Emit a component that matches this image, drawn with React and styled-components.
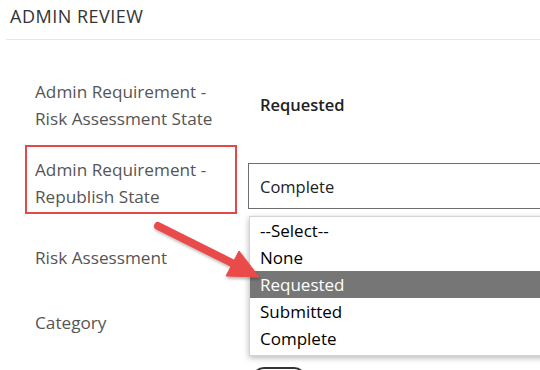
import React from 'react'
import styled, { createGlobalStyle } from 'styled-components'

const GlobalStyle = createGlobalStyle`
  html, body {
    margin: 0;
    padding: 0;
    background: #fff;
    overflow: hidden;
  }
  body {
    font-family: "Open Sans", "Noto Sans", sans-serif;
  }
`

const Page = styled.div`
  position: relative;
  width: 540px;
  height: 370px;
  overflow: hidden;
`

const Header = styled.div`
  margin-left: 6px;
  height: 40px;
  border-bottom: 1px solid #e6e6e6;
  display: flex;
  align-items: center;
  padding-left: 4px;
  box-sizing: border-box;
`

const HeaderTitle = styled.h2`
  margin: 0 0 7px;
  font-size: 18px;
  font-weight: 400;
  color: #333;
  letter-spacing: 0.5px;
`

const Form = styled.div`
  display: flex;
  flex-direction: column;
  padding-left: 25px;
  padding-top: 26px;
`

const Row = styled.div`
  display: grid;
  grid-template-columns: 212px 1fr;
  column-gap: 11px;
  align-items: ${p => (p.$top ? 'start' : 'center')};
  height: ${p => p.$h}px;
`

const Label = styled.div`
  font-size: 17.2px;
  line-height: 27px;
  color: #555;
  padding-left: 10px;
`

const Highlight = styled.div`
  margin-top: 2px;
  height: 69px;
  box-sizing: border-box;
  border: 2px solid #e24a48;
  padding: 9px 0 0 8px;
  font-size: 17.2px;
  line-height: 27px;
  color: #555;
`

const Value = styled.div`
  font-size: 16.5px;
  font-weight: 600;
  color: #222;
  padding-left: 12px;
`

const Field = styled.div`
  position: relative;
  margin-top: 20px;
  width: 320px;
`

const Select = styled.div`
  height: 46px;
  box-sizing: border-box;
  border: 1px solid #6e6e6e;
  display: flex;
  align-items: center;
  padding-left: 11px;
  font-size: 16.5px;
  color: #222;
`

const Menu = styled.ul`
  position: absolute;
  top: 53px;
  left: 1px;
  width: 320px;
  margin: 0;
  padding: 0 0 3px;
  list-style: none;
  background: #fff;
  border: 1px solid #d4d4d4;
  box-shadow: 0 2px 6px rgba(0, 0, 0, 0.28);
  z-index: 2;
`

const Option = styled.li`
  height: 27px;
  line-height: 27px;
  padding-left: 10px;
  font-size: 17px;
  color: ${p => (p.$active ? '#fff' : '#000')};
  background: ${p => (p.$active ? '#767676' : 'transparent')};
`

const Toggle = styled.div`
  margin: 21px 0 0 252px;
  width: 50px;
  height: 24px;
  border: 2px solid #333;
  border-radius: 12px;
`

const Arrow = styled.svg`
  position: absolute;
  left: 0;
  top: 0;
  z-index: 3;
  pointer-events: none;
`

const options = ['--Select--', 'None', 'Requested', 'Submitted', 'Complete']

const App = () => {
  return (
    <Page>
      <GlobalStyle />
      <Header>
        <HeaderTitle>ADMIN REVIEW</HeaderTitle>
      </Header>
      <Form>
        <Row $h={77}>
          <Label>Admin Requirement -<br />Risk Assessment State</Label>
          <Value>Requested</Value>
        </Row>
        <Row $h={73} $top>
          <Highlight>Admin Requirement -<br />Republish State</Highlight>
          <Field>
            <Select>Complete</Select>
            <Menu>
              {options.map(o => (
                <Option key={o} $active={o === 'Requested'}>{o}</Option>
              ))}
            </Menu>
          </Field>
        </Row>
        <Row $h={82}>
          <Label>Risk Assessment</Label>
          <div />
        </Row>
        <Row $h={48}>
          <Label>Category</Label>
          <div />
        </Row>
      </Form>
      <Toggle />
      <Arrow width="540" height="370" viewBox="0 0 540 370">
        <defs>
          <filter id="sh" x="-20%" y="-20%" width="140%" height="140%">
            <feDropShadow dx="1" dy="2" stdDeviation="1.5" floodColor="#000" floodOpacity="0.3" />
          </filter>
        </defs>
        <g filter="url(#sh)" fill="#e84b48" stroke="#e84b48">
          <line x1="158" y1="226" x2="236" y2="265" strokeWidth="8" strokeLinecap="round" />
          <polygon points="259,277 226,276 239,251" strokeWidth="1" strokeLinejoin="round" />
        </g>
      </Arrow>
    </Page>
  )
}

export default App
